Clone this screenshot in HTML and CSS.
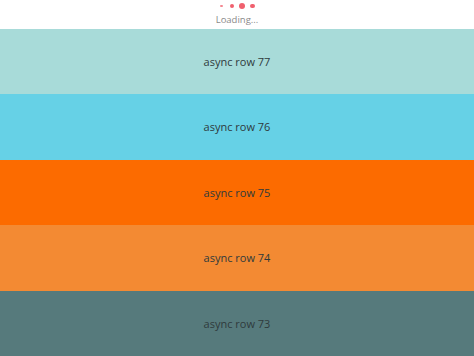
FILE: index.html
```html
<!DOCTYPE html>
<html>
<head>
<meta charset="utf-8">
<link rel="stylesheet" href="styles.css">
</head>
<body>
<div class="header">
  <div class="dots">
    <span class="slot"><span class="dot d1"></span></span>
    <span class="slot"><span class="dot d2"></span></span>
    <span class="slot"><span class="dot d3"></span></span>
    <span class="slot"><span class="dot d4"></span></span>
  </div>
  <div class="loading">Loading...</div>
</div>
<div class="list">
  <div class="row r1">async row 77</div>
  <div class="row r2">async row 76</div>
  <div class="row r3">async row 75</div>
  <div class="row r4">async row 74</div>
  <div class="row r5">async row 73</div>
</div>
</body>
</html>
```
FILE: styles.css
```css
html, body {
  margin: 0;
  padding: 0;
  background: #fff;
  font-family: "Open Sans", "Noto Sans", sans-serif;
}
.header {
  height: 28.5px;
  display: flex;
  flex-direction: column;
  align-items: center;
  box-sizing: border-box;
  padding-top: 3px;
}
.dots {
  display: flex;
  align-items: center;
  height: 6px;
}
.slot {
  width: 10.33px;
  display: flex;
  justify-content: center;
  align-items: center;
}
.dot {
  display: block;
  border-radius: 50%;
  background: #f0606e;
}
.d1 { width: 2.2px; height: 2.2px; opacity: 0.75; }
.d2 { width: 4.5px; height: 4.5px; }
.d3 { width: 6.2px; height: 6.2px; }
.d4 { width: 4.5px; height: 4.5px; }
.loading {
  font-size: 9.5px;
  color: #8a8a8a;
  line-height: 12px;
  margin-top: 5px;
}
.row {
  height: 65.5px;
  display: flex;
  align-items: center;
  justify-content: center;
  font-size: 11px;
  color: #2f3a3c;
}
.r1 { background: #a8dbd9; }
.r2 { background: #66d1e6; }
.r3 { background: #fc6b00; }
.r4 { background: #f38a33; }
.r5 { background: #567a7c; }
```
